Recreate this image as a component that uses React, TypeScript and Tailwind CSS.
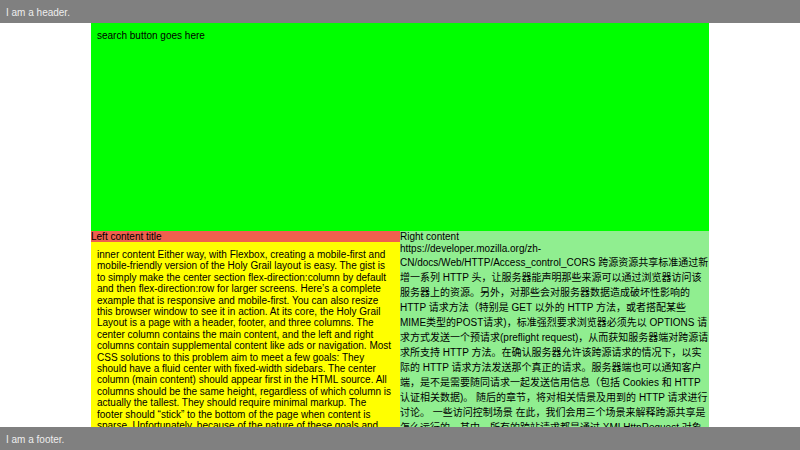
const leftText =
  'inner content Either way, with Flexbox, creating a mobile-first and mobile-friendly version of the Holy Grail layout is easy. The gist is to simply make the center section flex-direction:column by default and then flex-direction:row for larger screens. Here’s a complete example that is responsive and mobile-first. You can also resize this browser window to see it in action. At its core, the Holy Grail Layout is a page with a header, footer, and three columns. The center column contains the main content, and the left and right columns contain supplemental content like ads or navigation. Most CSS solutions to this problem aim to meet a few goals: They should have a fluid center with fixed-width sidebars. The center column (main content) should appear first in the HTML source. All columns should be the same height, regardless of which column is actually the tallest. They should require minimal markup. The footer should “stick” to the bottom of the page when content is sparse. Unfortunately, because of the nature of these goals and the original limitations of CSS, none of the classic solutions to this problem were ever able to satisfy all of them.';

const rightText =
  'https://developer.mozilla.org/zh-CN/docs/Web/HTTP/Access_control_CORS 跨源资源共享标准通过新增一系列 HTTP 头，让服务器能声明那些来源可以通过浏览器访问该服务器上的资源。另外，对那些会对服务器数据造成破坏性影响的 HTTP 请求方法（特别是 GET 以外的 HTTP 方法，或者搭配某些 MIME类型的POST请求)，标准强烈要求浏览器必须先以 OPTIONS 请求方式发送一个预请求(preflight request)，从而获知服务器端对跨源请求所支持 HTTP 方法。在确认服务器允许该跨源请求的情况下，以实际的 HTTP 请求方法发送那个真正的请求。服务器端也可以通知客户端，是不是需要随同请求一起发送信用信息（包括 Cookies 和 HTTP 认证相关数据)。 随后的章节，将对相关情景及用到的 HTTP 请求进行讨论。 一些访问控制场景 在此，我们会用三个场景来解释跨源共享是怎么运行的。其中，所有的跨站请求都是通过 XMLHttpRequest 对象发送的。';

export default function App() {
  return (
    <div className="min-h-[450px] bg-white text-[10px] leading-[11.5px] text-black font-['Liberation_Sans','Noto_Sans_CJK_SC',sans-serif]">
      {/* Header */}
      <header className="h-[23px] bg-[#808080] px-[6px] pt-[7px] text-[#eeeeee]">
        I am a header.
      </header>

      {/* Main */}
      <main className="w-[618px] mx-auto pb-[23px]">
        <div className="h-[208px] bg-[#00ff00] px-[6px] pt-[7px]">search button goes here</div>
        <div className="flex">
          <div className="w-1/2 flex flex-col">
            <div className="h-[11px] bg-[#f0604e] leading-[12px]">Left content title</div>
            <div className="flex-1 bg-[#ffff00] px-[6px] pt-[7px] pb-[6px] leading-[11.4px]">{leftText}</div>
          </div>
          <div className="w-1/2 bg-[#90ee90]">
            <div>Right content</div>
            <div className="leading-[normal]">{rightText}</div>
          </div>
        </div>
      </main>

      {/* Footer */}
      <footer className="fixed bottom-0 left-0 right-0 h-[23px] bg-[#808080] px-[6px] pt-[7px] text-[#eeeeee]">
        I am a footer.
      </footer>
    </div>
  );
}
